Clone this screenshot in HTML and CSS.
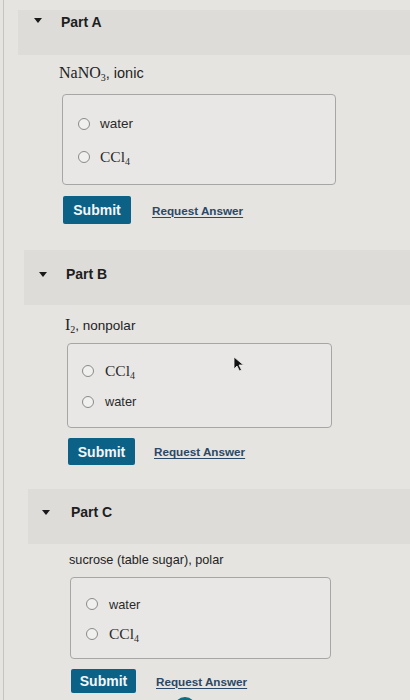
FILE: index.html
```html
<!DOCTYPE html>
<html>
<head>
<meta charset="utf-8">
<link rel="stylesheet" href="styles.css">
</head>
<body>
<div class="page">
  <section class="part part-a">
    <div class="band"><span class="tri"></span><span class="ptitle">Part A</span></div>
    <div class="body">
      <div class="q"><span class="m">NaNO<sub>3</sub></span>, ionic</div>
      <div class="box">
        <div class="row"><span class="radio"></span><span class="lbl">water</span></div>
        <div class="row"><span class="radio"></span><span class="lbl m">CCl<sub>4</sub></span></div>
      </div>
      <div class="actions"><button class="submit">Submit</button><a class="req">Request Answer</a></div>
    </div>
  </section>
  <section class="part part-b">
    <div class="band"><span class="tri"></span><span class="ptitle">Part B</span></div>
    <div class="body">
      <div class="q"><span class="m">I<sub>2</sub></span>, nonpolar</div>
      <div class="box">
        <div class="row"><span class="radio"></span><span class="lbl m">CCl<sub>4</sub></span></div>
        <div class="row"><span class="radio"></span><span class="lbl">water</span></div>
        <svg class="cursor" width="12" height="16" viewBox="0 0 12 16"><path d="M1 1 L1 13 L4 10 L6.5 15 L8.5 14 L6 9 L10.5 9 Z" fill="#111" stroke="#eee" stroke-width="0.8"/></svg>
      </div>
      <div class="actions"><button class="submit">Submit</button><a class="req">Request Answer</a></div>
    </div>
  </section>
  <section class="part part-c">
    <div class="band"><span class="tri"></span><span class="ptitle">Part C</span></div>
    <div class="body">
      <div class="q">sucrose (table sugar), polar</div>
      <div class="box">
        <div class="row"><span class="radio"></span><span class="lbl">water</span></div>
        <div class="row"><span class="radio"></span><span class="lbl m">CCl<sub>4</sub></span></div>
      </div>
      <div class="actions"><button class="submit">Submit</button><a class="req">Request Answer</a></div>
      <div class="hint"></div>
    </div>
  </section>
</div>
</body>
</html>
```
FILE: styles.css
```css
html, body {
  margin: 0;
  padding: 0;
}
body {
  width: 410px;
  height: 700px;
  overflow: hidden;
  background: #e5e4e1;
  font-family: "Liberation Sans", Arial, sans-serif;
  color: #222;
}
.page {
  position: relative;
  height: 700px;
  border-left: 1px solid #c4c4c2;
  margin-left: 3px;
  box-sizing: border-box;
}
.band {
  display: flex;
  align-items: center;
  background: #dddcd9;
  box-sizing: border-box;
}
.tri {
  width: 0;
  height: 0;
  border-left: 4px solid transparent;
  border-right: 4px solid transparent;
  border-top: 5px solid #1a1a1a;
}
.ptitle {
  font-weight: bold;
  font-size: 14px;
  color: #1e1e1e;
}
.q {
  font-size: 14.5px;
  line-height: 16px;
  color: #222;
}
.m {
  font-family: "Liberation Serif", "Times New Roman", serif;
  font-size: 16px;
}
sub {
  font-size: 10px;
  vertical-align: -3px;
  line-height: 0;
}
.box {
  position: relative;
  border: 1px solid #a6a6a4;
  border-radius: 4px;
  background: #e8e7e5;
  box-sizing: border-box;
}
.row {
  display: flex;
  align-items: center;
}
.radio {
  width: 10px;
  height: 10px;
  border: 1.5px solid #8a8a88;
  border-radius: 50%;
  background: #f0f0ee;
  flex: none;
}
.lbl {
  font-size: 13.5px;
  color: #2a2a2a;
}
.lbl.m {
  font-size: 15.5px;
}
.actions {
  display: flex;
  align-items: center;
}
.submit {
  background: #0c6286;
  color: #f4f6f8;
  border: none;
  border-radius: 2px;
  font-family: "Liberation Sans", Arial, sans-serif;
  font-weight: bold;
  font-size: 14px;
  padding: 0;
}
.req {
  font-weight: bold;
  font-size: 11.7px;
  color: #2b4866;
  text-decoration: underline;
  text-underline-offset: 2px;
}
.cursor {
  position: absolute;
  left: 165px;
  top: 12px;
}

/* Part A */
.part-a { padding-top: 10px; }
.part-a .band { margin-left: 14px; height: 45px; align-items: flex-start; padding-top: 4px; }
.part-a .tri { margin-left: 16px; margin-top: 4px; }
.part-a .ptitle { margin-left: 19px; }
.part-a .body { padding-left: 55px; }
.part-a .q { margin-top: 10px; }
.part-a .box { margin-top: 13px; margin-left: 3px; width: 274px; height: 91px; padding-top: 12px; }
.part-a .row { height: 33px; padding-left: 15px; gap: 10px; }
.part-a .actions { margin-top: 11px; margin-left: 4px; gap: 21px; }
.part-a .submit { width: 68px; height: 28px; }

/* Part B */
.part-b { padding-top: 26px; }
.part-b .band { margin-left: 20px; height: 55px; align-items: flex-start; padding-top: 16px; }
.part-b .tri { margin-left: 15px; margin-top: 6px; }
.part-b .ptitle { margin-left: 19px; }
.part-b .body { padding-left: 61px; }
.part-b .q { margin-top: 12px; font-size: 13.5px; }
.part-b .box { margin-top: 9px; margin-left: 2px; width: 265px; height: 85px; padding-top: 11px; }
.part-b .row { height: 31px; padding-left: 14px; gap: 11px; }
.part-b .lbl { font-size: 12.8px; }
.part-b .lbl.m { font-size: 15.5px; }
.part-b .actions { margin-top: 10px; margin-left: 3px; gap: 19px; }
.part-b .submit { width: 67px; height: 27px; }

/* Part C */
.part-c { padding-top: 24px; }
.part-c .band { margin-left: 24px; height: 55px; align-items: flex-start; padding-top: 15px; }
.part-c .tri { margin-left: 14px; margin-top: 6px; }
.part-c .ptitle { margin-left: 21px; }
.part-c .body { padding-left: 65px; }
.part-c .q { margin-top: 8px; font-size: 12.7px; }
.part-c .box { margin-top: 9px; margin-left: 1px; width: 261px; height: 82px; padding-top: 11px; }
.part-c .row { height: 30px; padding-left: 15px; gap: 11px; }
.part-c .lbl { font-size: 12.8px; }
.part-c .lbl.m { font-size: 15.5px; }
.part-c .actions { margin-top: 10px; margin-left: 2px; gap: 20px; }
.part-c .submit { width: 65px; height: 24px; }
.hint {
  margin-top: 4px;
  margin-left: 105px;
  width: 16px;
  height: 16px;
  border: 3px solid #0f6d80;
  border-radius: 50%;
}
```
